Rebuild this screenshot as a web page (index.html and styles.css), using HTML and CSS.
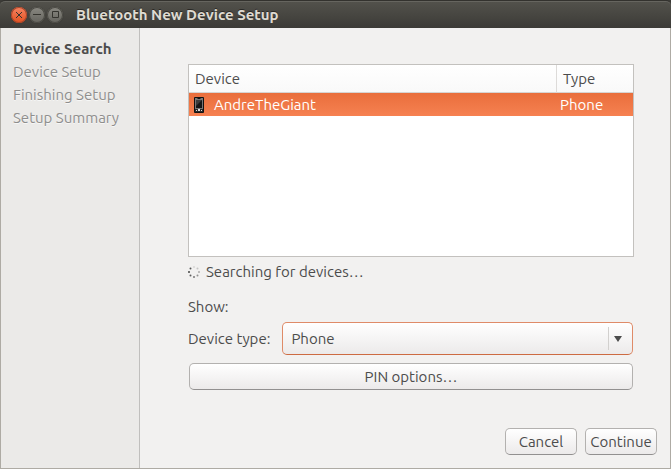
FILE: index.html
```html
<!DOCTYPE html>
<html lang="en">
<head>
    <meta charset="UTF-8">
    <meta name="viewport" content="width=device-width, initial-scale=1.0">
    <title>Bluetooth New Device Setup</title>
    <link rel="stylesheet" href="styles.css">
</head>
<body>
    <div class="window">
        <header class="titlebar">
            <button class="win-btn close" aria-label="Close">
                <svg viewBox="0 0 16 16"><path d="M5 5l6 6M11 5l-6 6"/></svg>
            </button>
            <button class="win-btn" aria-label="Minimize">
                <svg viewBox="0 0 16 16"><path d="M4 7.5h8"/></svg>
            </button>
            <button class="win-btn" aria-label="Maximize">
                <svg viewBox="0 0 16 16"><path d="M5.5 4.5h6v6h-6z"/></svg>
            </button>
            <h1>Bluetooth New Device Setup</h1>
        </header>

        <div class="content">
            <aside class="sidebar">
                <ol class="steps">
                    <li class="current">Device Search</li>
                    <li>Device Setup</li>
                    <li>Finishing Setup</li>
                    <li>Setup Summary</li>
                </ol>
            </aside>

            <main class="main">
                <div class="page">
                    <div class="device-list">
                        <table>
                            <thead>
                                <tr>
                                    <th>Device</th>
                                    <th class="type">Type</th>
                                </tr>
                            </thead>
                            <tbody>
                                <tr class="selected">
                                    <td>
                                        <div class="device">
                                            <svg class="phone-icon" viewBox="0 0 10 16">
                                                <rect width="10" height="16" rx="1" fill="#111"/>
                                                <rect x="1" y="1" width="8" height="14" fill="#777"/>
                                                <rect x="2" y="3" width="6" height="8" fill="#161616"/>
                                                <path d="M2 3h6L2 9z" fill="#3c3c3c"/>
                                                <path d="M3.5 1.5h3" stroke="#111"/>
                                                <rect x="1" y="12" width="8" height="3" fill="#2a2a2a"/>
                                                <path d="M2 13h1v1H2zM4 12h2v2H4zM7 13h1v1H7z" fill="#ddd"/>
                                            </svg>
                                            AndreTheGiant
                                        </div>
                                    </td>
                                    <td class="type">Phone</td>
                                </tr>
                            </tbody>
                        </table>
                    </div>

                    <p class="status">
                        <svg class="spinner" viewBox="0 0 12 12" fill="#444">
                            <circle cx="6" cy="1" r="1" opacity=".15"/>
                            <circle cx="9.5" cy="2.5" r="1" opacity=".25"/>
                            <circle cx="11" cy="6" r="1" opacity=".4"/>
                            <circle cx="9.5" cy="9.5" r="1" opacity=".55"/>
                            <circle cx="6" cy="11" r="1" opacity=".7"/>
                            <circle cx="2.5" cy="9.5" r="1" opacity=".85"/>
                            <circle cx="1" cy="6" r="1"/>
                            <circle cx="2.5" cy="2.5" r="1" opacity=".9"/>
                        </svg>
                        Searching for devices…
                    </p>

                    <p class="show">Show:</p>

                    <div class="field">
                        <label for="deviceType">Device type:</label>
                        <div class="select-wrap">
                            <select id="deviceType">
                                <option>Phone</option>
                            </select>
                            <svg class="arrow" viewBox="0 0 8 6"><path d="M0 0h8L4 6z"/></svg>
                        </div>
                    </div>

                    <button class="btn pin">PIN options…</button>
                </div>

                <footer class="actions">
                    <button class="btn">Cancel</button>
                    <button class="btn">Continue</button>
                </footer>
            </main>
        </div>
    </div>
</body>
</html>
```
FILE: styles.css
```css
* {
    margin: 0;
    padding: 0;
    box-sizing: border-box;
}

body {
    font-family: Ubuntu, "Noto Sans", sans-serif;
    font-size: 15px;
    line-height: 23px;
    color: #4c4c4c;
    background-color: #3c3b37;
}

button, select {
    font: inherit;
    color: inherit;
}

.window {
    display: flex;
    flex-direction: column;
    min-height: 100vh;
}

/* Title bar */
.titlebar {
    display: flex;
    align-items: center;
    gap: 2px;
    height: 28px;
    padding-left: 11px;
    border-top: 1px solid #33322e;
    background: linear-gradient(#53524c, #3c3b37);
    box-shadow: inset 0 1px #66655f;
    border-radius: 5px 5px 0 0;
}

.titlebar h1 {
    margin-left: 11px;
    font-size: 15px;
    line-height: 20px;
    color: #dfdbd2;
    text-shadow: 0 -1px #2a2926;
}

.win-btn {
    width: 16px;
    height: 16px;
    border: none;
    border-radius: 50%;
    background: linear-gradient(#8a8982, #64635d);
    box-shadow: inset 0 0 0 1px #4a4943, 0 0 1px #2a2926;
}

.win-btn.close {
    background: linear-gradient(#f58463, #e2501f);
    box-shadow: inset 0 0 0 1px #a8452a, 0 0 1px #2a2926;
}

.win-btn svg {
    display: block;
    width: 16px;
    height: 16px;
    fill: none;
    stroke: #35342f;
}

/* Content */
.content {
    flex: 1;
    display: flex;
    border: 1px solid #aeaba4;
    border-top: none;
    background-color: #f2f1f0;
}

.sidebar {
    width: 139px;
    padding: 9px 12px;
    border-right: 1px solid #c0bfbd;
    background-color: #ebeae8;
}

.steps {
    list-style: none;
    color: #8f8e8d;
    text-shadow: 0 1px #f7f7f6;
    white-space: nowrap;
}

.steps .current {
    font-weight: bold;
    color: #4c4c4c;
    text-shadow: none;
}

.main {
    flex: 1;
    display: flex;
    flex-direction: column;
    justify-content: space-between;
    padding: 36px 13px 13px 48px;
}

.page {
    flex: 1;
    display: flex;
    flex-direction: column;
    padding-right: 23px;
    margin-bottom: 38px;
}

.device-list {
    flex: 1;
    min-height: 100px;
    border: 1px solid #c3c1be;
    background-color: #fff;
}

table {
    width: 100%;
    border-collapse: separate;
    border-spacing: 0;
}

th {
    height: 28px;
    padding: 0 6px;
    border-bottom: 1px solid #d6d4d2;
    background: linear-gradient(#fff, #f9f9f9);
    font-weight: normal;
    text-align: left;
}

th.type {
    width: 77px;
    border-left: 1px solid #dddbd9;
}

td {
    height: 23px;
    padding: 0 4px;
}

.selected {
    color: #fff;
    background: linear-gradient(#e96e3c, #f68151);
}

.device {
    display: flex;
    align-items: center;
    gap: 10px;
}

.phone-icon {
    width: 10px;
    height: 16px;
    margin-left: 1px;
}

.status {
    display: flex;
    align-items: center;
    gap: 6px;
    margin-top: 3px;
}

.spinner {
    width: 12px;
    height: 12px;
}

.show {
    margin: 12px 0 4px;
}

.field {
    display: flex;
    align-items: center;
    gap: 12px;
    margin-bottom: 8px;
}

.select-wrap {
    position: relative;
    flex: 1;
    margin-right: 1px;
}

.select-wrap select {
    display: block;
    width: 100%;
    height: 33px;
    padding: 0 32px 0 8px;
    border: 1px solid #df8b68;
    border-bottom-color: #cd6b42;
    border-radius: 5px;
    background: linear-gradient(#fff, #eceaea);
    appearance: none;
}

/* Drop-down arrow with its divider, drawn over the select */
.arrow {
    position: absolute;
    top: 5px;
    right: 0;
    width: 25px;
    height: 23px;
    padding: 9px 11px 8px 5px;
    border-left: 1px solid #d2d0ce;
    fill: #4c4c4c;
    pointer-events: none;
}

.btn {
    width: 72px;
    height: 27px;
    border: 1px solid #b3b1af;
    border-bottom-color: #929090;
    border-radius: 5px;
    background: linear-gradient(#fff, #eceaea);
}

.btn.pin {
    width: auto;
    margin: 0 1px;
}

.actions {
    display: flex;
    justify-content: flex-end;
    gap: 8px;
}
```
